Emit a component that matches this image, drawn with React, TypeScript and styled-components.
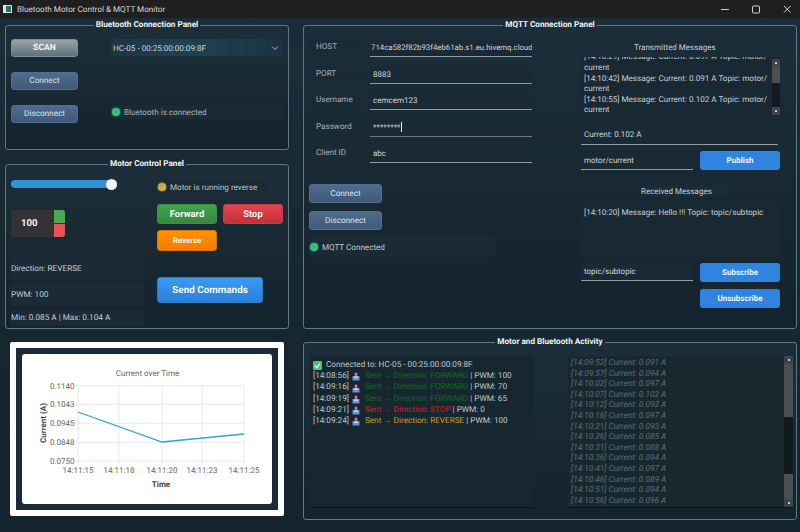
import React from "react";
import styled, { createGlobalStyle } from "styled-components";

const Global = createGlobalStyle`
  html, body { margin: 0; padding: 0; background: #14232d; }
  body { width: 800px; height: 532px; overflow: hidden; font-family: Roboto, "Open Sans", sans-serif; color: #d5dcdf; text-rendering: geometricPrecision; }
  * { box-sizing: border-box; }
  button { text-rendering: geometricPrecision; }
`;

const Window = styled.div`
  width: 800px;
  height: 532px;
  display: flex;
  flex-direction: column;
  background: linear-gradient(180deg, #1b2d38 0%, #14242e 100%);
`;

const TitleBar = styled.header`
  height: 18px;
  flex: none;
  display: flex;
  align-items: center;
  background: #1f1f1f;
  padding-left: 3px;
  font-size: 8.15px;
  color: #d8d8d8;
`;
const TitleText = styled.span`
  margin-left: 5px;
  flex: 1;
`;
const WinControls = styled.div`
  display: flex;
  color: #d0d0d0;
  margin-right: 9px;
  gap: 23px;
  align-items: center;
`;

const Main = styled.main`
  display: grid;
  grid-template-columns: 284px 494px;
  grid-template-rows: 310px 184px;
  column-gap: 14px;
  row-gap: 7px;
  padding: 1px 0 0 5px;
`;
const LeftStack = styled.div`
  display: grid;
  grid-template-rows: 131px 171px;
  row-gap: 8px;
`;

const Panel = styled.fieldset`
  margin: 0;
  min-width: 0;
  border: 1px solid #5e7985;
  border-radius: 3px;
  padding: 8px 5px 0;
  background: linear-gradient(180deg, #1c2e39 0%, #14242e 100%);
`;
const Legend = styled.legend`
  margin: 0 auto;
  padding: 0 2px;
  font-size: 8.2px;
  line-height: 12px;
  height: 12px;
  font-weight: 700;
  color: #f2f5f6;
`;

const BtGrid = styled.div`
  display: grid;
  grid-template-columns: 67px 172px;
  grid-auto-rows: 18px;
  column-gap: 33px;
  row-gap: 15px;
`;

const Action = styled.button<{ $tone?: "gray" | "steel" }>`
  border: 1px solid ${(p) => (p.$tone === "gray" ? "#7e9096" : "#50708f")};
  border-radius: 3px;
  padding: 0;
  font-family: inherit;
  font-size: ${(p) => (p.$tone === "gray" ? "8.6px" : "8.2px")};
  font-weight: ${(p) => (p.$tone === "gray" ? 700 : 400)};
  color: ${(p) => (p.$tone === "gray" ? "#f2f4f4" : "#dce4ea")};
  background: ${(p) =>
    p.$tone === "gray"
      ? "linear-gradient(180deg, #98a6aa 0%, #5e7078 100%)"
      : "linear-gradient(180deg, #4d6c8e 0%, #41597a 100%)"};
`;
const MqttAction = styled(Action)`
  width: 73px;
  height: 19px;
`;

const SelectBox = styled.div`
  height: 17px;
  display: flex;
  align-items: center;
  justify-content: space-between;
  padding: 0 4px 0 2px;
  border-radius: 2px;
  font-size: 8.1px;
  color: #ccd6da;
  background: linear-gradient(90deg, #1c3644 0%, #1e4252 45%, #1a3340 100%);
`;
const Status = styled.div<{ $width?: number; $height?: number }>`
  display: flex;
  align-items: center;
  gap: 4px;
  height: ${(p) => p.$height ?? 14}px;
  width: ${(p) => (p.$width ? `${p.$width}px` : "100%")};
  font-size: 8.1px;
  color: #aeb9bd;
  background: #1a2b35;
  border-radius: 2px;
`;
const Led = styled.span<{ $color: string }>`
  width: 8px;
  height: 8px;
  flex: none;
  border-radius: 50%;
  margin-left: 1px;
  background: radial-gradient(circle at 40% 40%, ${(p) => p.$color}cc, ${(p) => p.$color});
  box-shadow: 0 0 2px ${(p) => p.$color};
`;

const MotorGrid = styled.div`
  display: grid;
  grid-template-columns: 133px 126px;
  column-gap: 13px;
`;
const Column = styled.div`
  display: flex;
  flex-direction: column;
  align-items: flex-start;
`;
const SliderTrack = styled.div`
  width: 106px;
  height: 8px;
  margin-top: 2px;
  border-radius: 4px;
  background: #3192d6;
  display: flex;
  align-items: center;
  justify-content: flex-end;
`;
const SliderThumb = styled.span`
  width: 11px;
  height: 11px;
  flex: none;
  border-radius: 50%;
  background: #eef6fb;
`;
const Spin = styled.div`
  margin-top: 22px;
  width: 54px;
  height: 27px;
  display: flex;
  border-radius: 3px;
  overflow: hidden;
  background: #333335;
`;
const SpinValue = styled.div`
  flex: 1;
  display: flex;
  align-items: center;
  padding-left: 10px;
  font-size: 9.6px;
  font-weight: 700;
  color: #f3f3f3;
`;
const SpinArrows = styled.div`
  width: 11px;
  display: flex;
  flex-direction: column;
  justify-content: space-between;
`;
const SpinUp = styled.span`
  height: 13px;
  background: #4aaa55;
`;
const SpinDown = styled.span`
  height: 13px;
  background: #e6535a;
`;
const InfoRow = styled.div<{ $height: number; $top: number }>`
  width: 133px;
  height: ${(p) => p.$height}px;
  margin-top: ${(p) => p.$top}px;
  display: flex;
  align-items: center;
  font-size: 8.2px;
  color: #c4cdd1;
  background: #1b2a35;
`;
const MotorStatus = styled(Status)`
  margin-top: 2px;
  color: #bcc6ca;
`;
const DriveGrid = styled.div`
  margin-top: 10px;
  display: grid;
  grid-template-columns: 60px 60px;
  column-gap: 6px;
  row-gap: 6px;
`;
const Drive = styled.button<{ $bg: string; $edge: string; $height: number; $size: number }>`
  height: ${(p) => p.$height}px;
  padding: 0;
  border: 1px solid ${(p) => p.$edge};
  border-radius: 3px;
  font-family: inherit;
  font-size: ${(p) => p.$size}px;
  font-weight: 700;
  color: #f6f6f6;
  background: ${(p) => p.$bg};
`;
const SendButton = styled.button`
  margin-top: 26px;
  width: 106px;
  height: 26px;
  padding: 0;
  border: 1px solid #2a7cc8;
  border-radius: 3px;
  font-family: inherit;
  font-size: 9.9px;
  font-weight: 700;
  color: #f3f8fc;
  background: linear-gradient(180deg, #3a9bf0 0%, #2a80d8 100%);
`;

const ChartFrame = styled.section`
  margin: 6px 5px 4px 5px;
  padding: 6px;
  background: #1a2a36;
  border: 6px solid #ffffff;
  border-radius: 2px;
`;
const ChartCard = styled.div`
  height: 150px;
  background: #ffffff;
  border-radius: 3px;
  overflow: hidden;
`;

const MqttGrid = styled.div`
  display: grid;
  grid-template-columns: 223px 199px;
  column-gap: 49px;
`;
const FormRows = styled.div`
  display: grid;
  grid-template-columns: 53px 162px;
  column-gap: 8px;
  grid-auto-rows: 18px;
  row-gap: 8.5px;
`;
const FieldLabel = styled.label`
  height: 14px;
  padding-left: 7px;
  display: flex;
  align-items: center;
  font-size: 8.1px;
  color: #a7b3b9;
  background: #1a2b36;
`;
const Field = styled.div<{ $active?: boolean; $tight?: boolean; $width?: number; $height?: number; $top?: number }>`
  height: ${(p) => p.$height ?? 18}px;
  width: ${(p) => (p.$width ? `${p.$width}px` : "100%")};
  margin-top: ${(p) => p.$top ?? 0}px;
  display: flex;
  align-items: center;
  padding: 0 0 0 ${(p) => (p.$tight ? 1 : 3)}px;
  font-size: ${(p) => (p.$tight ? 7.8 : 8)}px;
  white-space: nowrap;
  overflow: hidden;
  color: #cfd7db;
  background: #1a2a35;
  border-bottom: 1px solid ${(p) => (p.$active ? "#6f7494" : "#939ea4")};
`;
const Caret = styled.span`
  width: 1px;
  height: 10px;
  background: #e6e6e6;
`;
const MqttButtons = styled.div`
  margin-top: 21px;
  display: flex;
  flex-direction: column;
  gap: 8px;
`;
const MqttStatus = styled(Status)`
  margin-top: 7px;
  color: #c2cbcf;
`;
const SectionLabel = styled.div<{ $left: number; $top: number; $width: number }>`
  margin: ${(p) => p.$top}px 0 0 ${(p) => p.$left}px;
  width: ${(p) => p.$width}px;
  height: 12px;
  display: flex;
  align-items: center;
  padding-left: 1px;
  font-size: 8px;
  white-space: nowrap;
  color: #c6cfd3;
  background: #1a2c37;
`;
const MessageBox = styled.div<{ $height: number; $top: number }>`
  width: 199px;
  height: ${(p) => p.$height}px;
  margin-top: ${(p) => p.$top}px;
  display: flex;
  background: #192934;
  border-radius: 2px;
`;
const MessageText = styled.div<{ $end?: boolean }>`
  flex: 1;
  min-width: 0;
  overflow: hidden;
  display: flex;
  flex-direction: column;
  justify-content: ${(p) => (p.$end ? "flex-end" : "flex-start")};
  padding: ${(p) => (p.$end ? "0 4px 2px 3px" : "4px 3px")};
  font-size: 8.1px;
  line-height: 10.6px;
  color: #c8d0d4;
  white-space: nowrap;
`;
const Scrollbar = styled.div`
  width: 8px;
  margin: 2px 0;
  display: flex;
  flex-direction: column;
  background: #101a20;
`;
const ScrollEnd = styled.span`
  height: 8px;
  flex: none;
  background: #3d4549;
  display: flex;
  align-items: center;
  justify-content: center;
  &::before {
    content: "";
    width: 2px;
    height: 2px;
    background: #c8c8c8;
  }
`;
const ScrollThumb = styled.span<{ $height: number }>`
  display: block;
  height: ${(p) => p.$height}px;
  flex: none;
  background: #4b4f50;
`;
const ScrollGap = styled.span`
  flex: 1;
`;
const ActionRow = styled.div`
  margin-top: 6px;
  display: flex;
  justify-content: space-between;
  align-items: flex-start;
`;
const Primary = styled.button<{ $top?: number; $self?: boolean }>`
  width: 80px;
  height: 19px;
  margin-top: ${(p) => p.$top ?? 0}px;
  align-self: ${(p) => (p.$self ? "flex-end" : "auto")};
  padding: 0;
  border: none;
  border-radius: 3px;
  font-family: inherit;
  font-size: 8px;
  font-weight: 700;
  color: #eef5fb;
  background: #2e84de;
`;
const MqttRight = styled(Column)`
  align-items: stretch;
`;

const ActivityGrid = styled.div`
  display: grid;
  grid-template-columns: 224px 225px;
  column-gap: 34px;
  padding-left: 1px;
  height: 152px;
`;
const LogBox = styled.div`
  height: 152px;
  background: #17272f;
  border-bottom: 1px solid #0b141a;
  padding: 4px 0 0 0;
  font-size: 8.2px;
  line-height: 11.2px;
  color: #bdc7cb;
`;
const LogLine = styled.div`
  display: flex;
  align-items: center;
  white-space: pre;
  padding-left: 3px;
`;
const Tone = styled.span<{ $color: string }>`
  color: ${(p) => p.$color};
`;
const EmojiBox = styled.svg`
  margin: 0 5px 0 3px;
  flex: none;
`;
const CheckBox = styled.svg`
  margin-right: 4px;
  flex: none;
`;
const CurrentLog = styled.div`
  display: flex;
  height: 152px;
  background: #18282f;
  border-bottom: 1px solid #0b141a;
`;
const CurrentText = styled.div`
  flex: 1;
  padding: 2px 0 0 3px;
  font-size: 8.3px;
  line-height: 10.6px;
  font-style: italic;
  color: #5e6d75;
`;
const LogScroll = styled(Scrollbar)`
  width: 9px;
  margin: 0;
`;

const Chevron = () => (
  <svg width="8" height="6" viewBox="0 0 8 6">
    <path d="M1 1.5 L4 4.5 L7 1.5" fill="none" stroke="#a8bcc6" strokeWidth="1" />
  </svg>
);

const Outbox = () => (
  <EmojiBox width="8" height="9" viewBox="0 0 8 9">
    <path d="M4 0 L6.2 2.6 H5 V4 H3 V2.6 H1.8 Z" fill="#d86aa8" />
    <rect x="0.5" y="4" width="7" height="4.5" rx="0.6" fill="#6f8fd8" />
    <rect x="2" y="4.6" width="4" height="1.2" fill="#e2e8f5" />
  </EmojiBox>
);

const CheckMark = () => (
  <CheckBox width="9" height="9" viewBox="0 0 9 9">
    <rect width="9" height="9" rx="1.2" fill="#4dc27a" />
    <path d="M2 4.6 L3.9 6.5 L7 2.6" fill="none" stroke="#eefaf2" strokeWidth="1.3" />
  </CheckBox>
);

const AppIcon = () => (
  <svg width="9" height="8" viewBox="0 0 9 8">
    <rect width="9" height="8" fill="#dfe6e8" />
    <rect x="3" y="1" width="5" height="6" fill="#2f6a66" />
  </svg>
);

const CHART = {
  xs: [78, 119, 162, 202, 244],
  xLabels: ["14:11:15", "14:11:18", "14:11:20", "14:11:23", "14:11:25"],
  ys: [385.7, 404.3, 423.2, 442.3, 461],
  yLabels: ["0.1140", "0.1043", "0.0945", "0.0848", "0.0750"],
};

const CurrentChart = () => (
  <svg width="250" height="150" viewBox="22 354 250 150" fontFamily="Roboto, sans-serif">
    <text x="147.5" y="376" textAnchor="middle" fontSize="8" fill="#666">Current over Time</text>
    {CHART.xs.map((x) => (
      <line key={x} x1={x} x2={x} y1={385.7} y2={464} stroke="#e4e4e4" strokeWidth="0.8" />
    ))}
    {CHART.ys.map((y) => (
      <line key={y} x1={75} x2={244} y1={y} y2={y} stroke="#e4e4e4" strokeWidth="0.8" />
    ))}
    {CHART.yLabels.map((t, i) => (
      <text key={t} x={74.5} y={CHART.ys[i] + 2.8} textAnchor="end" fontSize="8" fill="#666">{t}</text>
    ))}
    {CHART.xLabels.map((t, i) => (
      <text key={t} x={CHART.xs[i]} y={473} textAnchor="middle" fontSize="8" fill="#666">{t}</text>
    ))}
    <text x="161" y="487" textAnchor="middle" fontSize="8" fontWeight="700" fill="#444">Time</text>
    <text transform="translate(46 423) rotate(-90)" textAnchor="middle" fontSize="8" fontWeight="700" fill="#444">Current (A)</text>
    <polyline points="78,412 162,442 244,434" fill="none" stroke="#3aa0d8" strokeWidth="1.3" />
  </svg>
);

const sent = [
  { time: "14:08:56", text: "Sent → Direction: FORWARD", color: "#0f6b22", pwm: 100 },
  { time: "14:09:16", text: "Sent → Direction: FORWARD", color: "#0f6b22", pwm: 70 },
  { time: "14:09:19", text: "Sent → Direction: FORWARD", color: "#0f6b22", pwm: 65 },
  { time: "14:09:21", text: "Sent → Direction: STOP", color: "#d81e2a", pwm: 0 },
  { time: "14:09:24", text: "Sent → Direction: REVERSE", color: "#d89a1e", pwm: 100 },
];

const currents = [
  ["14:09:52", "0.091"], ["14:09:57", "0.094"], ["14:10:02", "0.097"], ["14:10:07", "0.102"],
  ["14:10:12", "0.092"], ["14:10:16", "0.097"], ["14:10:21", "0.093"], ["14:10:26", "0.085"],
  ["14:10:31", "0.088"], ["14:10:36", "0.094"], ["14:10:41", "0.097"], ["14:10:46", "0.089"],
  ["14:10:51", "0.094"], ["14:10:56", "0.096"],
];

const fields: [string, string][] = [
  ["HOST", "714ca582f82b93f4eb61ab.s1.eu.hivemq.cloud"],
  ["PORT", "8883"],
  ["Username", "cemcem123"],
  ["Password", "********"],
  ["Client ID", "abc"],
];

export default function App() {
  return (
    <Window>
      <Global />
      <TitleBar>
        <AppIcon />
        <TitleText>Bluetooth Motor Control &amp; MQTT Monitor</TitleText>
        <WinControls>
          <svg width="8" height="9" viewBox="0 0 8 9"><path d="M0 4.5 H8" stroke="currentColor" /></svg>
          <svg width="8" height="9" viewBox="0 0 8 9"><rect x="0.5" y="1" width="7" height="7" rx="1" fill="none" stroke="currentColor" /></svg>
          <svg width="8" height="9" viewBox="0 0 8 9"><path d="M1 1 L7.5 7.5 M7.5 1 L1 7.5" stroke="currentColor" /></svg>
        </WinControls>
      </TitleBar>
      <Main>
        <LeftStack>
          <Panel>
            <Legend>Bluetooth Connection Panel</Legend>
            <BtGrid>
              <Action $tone="gray">SCAN</Action>
              <SelectBox>
                <span>HC-05 - 00:25:00:00:09:8F</span>
                <Chevron />
              </SelectBox>
              <Action $tone="steel">Connect</Action>
              <span />
              <Action $tone="steel">Disconnect</Action>
              <Status>
                <Led $color="#3fd484" />
                Bluetooth is connected
              </Status>
            </BtGrid>
          </Panel>
          <Panel>
            <Legend>Motor Control Panel</Legend>
            <MotorGrid>
              <Column>
                <SliderTrack>
                  <SliderThumb />
                </SliderTrack>
                <Spin>
                  <SpinValue>100</SpinValue>
                  <SpinArrows>
                    <SpinUp />
                    <SpinDown />
                  </SpinArrows>
                </Spin>
                <InfoRow $height={23} $top={20}>Direction: REVERSE</InfoRow>
                <InfoRow $height={23} $top={3}>PWM: 100</InfoRow>
                <InfoRow $height={17} $top={3}>Min: 0.085 A | Max: 0.104 A</InfoRow>
              </Column>
              <Column>
                <MotorStatus $width={113}>
                  <Led $color="#e8c050" />
                  Motor is running reverse
                </MotorStatus>
                <DriveGrid>
                  <Drive $bg="linear-gradient(180deg,#43a34b,#36893e)" $edge="#3a9443" $height={20} $size={9.4}>Forward</Drive>
                  <Drive $bg="linear-gradient(180deg,#e2444e,#c5303a)" $edge="#cf3a44" $height={20} $size={9.4}>Stop</Drive>
                  <Drive $bg="linear-gradient(180deg,#ff9200,#f57c00)" $edge="#e07400" $height={21} $size={7.9}>Reverse</Drive>
                </DriveGrid>
                <SendButton>Send Commands</SendButton>
              </Column>
            </MotorGrid>
          </Panel>
        </LeftStack>
        <Panel>
          <Legend>MQTT Connection Panel</Legend>
          <MqttGrid>
            <Column>
              <FormRows>
                {fields.map(([label, value]) => (
                  <React.Fragment key={label}>
                    <FieldLabel>{label}</FieldLabel>
                    <Field $active={label === "Password"} $tight={label === "HOST"}>
                      {value}
                      {label === "Password" && <Caret />}
                    </Field>
                  </React.Fragment>
                ))}
              </FormRows>
              <MqttButtons>
                <MqttAction $tone="steel">Connect</MqttAction>
                <MqttAction $tone="steel">Disconnect</MqttAction>
              </MqttButtons>
              <MqttStatus $width={186} $height={20}>
                <Led $color="#3fd484" />
                MQTT Connected
              </MqttStatus>
            </Column>
            <MqttRight>
              <SectionLabel $left={52} $top={2} $width={100}>Transmitted Messages</SectionLabel>
              <MessageBox $height={60} $top={4}>
                <MessageText $end>
                  <div>[14:10:29] Message: Current: 0.097 A Topic: motor/</div>
                  <div>current</div>
                  <div>[14:10:42] Message: Current: 0.091 A Topic: motor/</div>
                  <div>current</div>
                  <div>[14:10:55] Message: Current: 0.102 A Topic: motor/</div>
                  <div>current</div>
                </MessageText>
                <Scrollbar>
                  <ScrollEnd />
                  <ScrollThumb $height={16} />
                  <ScrollGap />
                  <ScrollEnd />
                </Scrollbar>
              </MessageBox>
              <Field $top={8} $height={20} $width={197}>Current: 0.102 A</Field>
              <ActionRow>
                <Field $width={112} $height={19}>motor/current</Field>
                <Primary>Publish</Primary>
              </ActionRow>
              <SectionLabel $left={59} $top={15} $width={87}>Received Messages</SectionLabel>
              <MessageBox $height={54} $top={6}>
                <MessageText>[14:10:20] Message: Hello !!! Topic: topic/subtopic</MessageText>
              </MessageBox>
              <ActionRow>
                <Field $width={112} $height={18}>topic/subtopic</Field>
                <Primary>Subscribe</Primary>
              </ActionRow>
              <Primary $top={7} $self>Unsubscribe</Primary>
            </MqttRight>
          </MqttGrid>
        </Panel>
        <ChartFrame>
          <ChartCard>
            <CurrentChart />
          </ChartCard>
        </ChartFrame>
        <Panel>
          <Legend>Motor and Bluetooth Activity</Legend>
          <ActivityGrid>
            <LogBox>
              <LogLine>
                <CheckMark />
                Connected to: HC-05 - 00:25:00:00:09:8F
              </LogLine>
              {sent.map((s) => (
                <LogLine key={s.time}>
                  [{s.time}]
                  <Outbox />
                  <Tone $color={s.color}>{s.text}</Tone> | PWM: {s.pwm}
                </LogLine>
              ))}
            </LogBox>
            <CurrentLog>
              <CurrentText>
                {currents.map(([t, v]) => (
                  <div key={t}>[{t}] Current: {v} A</div>
                ))}
              </CurrentText>
              <LogScroll>
                <ScrollEnd />
                <ScrollThumb $height={53} />
                <ScrollGap />
                <ScrollThumb $height={25} />
                <ScrollEnd />
              </LogScroll>
            </CurrentLog>
          </ActivityGrid>
        </Panel>
      </Main>
    </Window>
  );
}
